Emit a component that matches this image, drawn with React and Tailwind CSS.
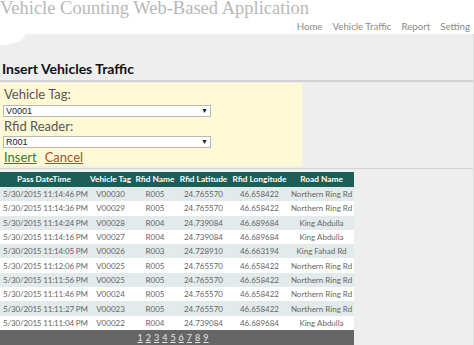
export default function App() {
  const rows = [
    ["5/30/2015 11:14:46 PM", "V00030", "R005", "24.765570", "46.658422", "Northern Ring Rd"],
    ["5/30/2015 11:14:36 PM", "V00029", "R005", "24.765570", "46.658422", "Northern Ring Rd"],
    ["5/30/2015 11:14:24 PM", "V00028", "R004", "24.739084", "46.689684", "King Abdulla"],
    ["5/30/2015 11:14:16 PM", "V00027", "R004", "24.739084", "46.689684", "King Abdulla"],
    ["5/30/2015 11:14:05 PM", "V00026", "R003", "24.728910", "46.663194", "King Fahad Rd"],
    ["5/30/2015 11:12:06 PM", "V00025", "R005", "24.765570", "46.658422", "Northern Ring Rd"],
    ["5/30/2015 11:11:56 PM", "V00025", "R005", "24.765570", "46.658422", "Northern Ring Rd"],
    ["5/30/2015 11:11:46 PM", "V00024", "R005", "24.765570", "46.658422", "Northern Ring Rd"],
    ["5/30/2015 11:11:27 PM", "V00023", "R005", "24.765570", "46.658422", "Northern Ring Rd"],
    ["5/30/2015 11:11:04 PM", "V00022", "R004", "24.739084", "46.689684", "King Abdulla"],
  ];
  const heads = ["Pass DateTime", "Vehicle Tag", "Rfid Name", "Rfid Latitude", "Rfid Longitude", "Road Name"];
  return (
    <div className="w-[474px] h-[345px] overflow-hidden bg-white font-['Lato',sans-serif]">
      <div className="h-[34px] flex flex-col">
        <div className="h-[17px] leading-[17px] text-[18.5px] text-[#b8b8b8] font-['Liberation_Serif',serif] whitespace-nowrap">
          Vehicle Counting Web-Based Application
        </div>
        <div className="flex justify-end gap-[10px] pr-[4px] mt-[3px] text-[9.7px] leading-[12px] text-[#8a8a8a]">
          <span>Home</span>
          <span>Vehicle Traffic</span>
          <span>Report</span>
          <span>Setting</span>
        </div>
      </div>
      <div className="relative h-[311px] bg-[#eeeeee] border-r border-[#dcdcdc]">
        <div className="absolute left-0 top-0 w-[25px] h-[11px] bg-white rounded-br-[100%]"></div>
        <div className="pt-[26px] pl-[2px] h-[46px] text-[14px] leading-[17px] font-bold text-[#111]">
          Insert Vehicles Traffic
        </div>
        <div className="border-t-2 border-b border-[#d2d2d2] pt-[1px] pb-[2px]">
          <div className="w-[302px] h-[83px] bg-[#fff9d5] pl-[3px] pt-[3px] text-[#555] text-[13px] leading-[16px]">
            <div className="pl-[1px]">Vehicle Tag:</div>
            <div className="mt-[3px] w-[208px] h-[12px] bg-white border border-[#b8b8b8] flex items-center justify-between px-[2px] text-[9px] text-[#222] font-['Liberation_Sans',sans-serif]">
              <span>V0001</span>
              <span className="text-[7px]">▼</span>
            </div>
            <div className="pl-[1px] mt-[1px]">Rfid Reader:</div>
            <div className="mt-[2px] w-[208px] h-[12px] bg-white border border-[#b8b8b8] flex items-center justify-between px-[2px] text-[9px] text-[#222] font-['Liberation_Sans',sans-serif]">
              <span>R001</span>
              <span className="text-[7px]">▼</span>
            </div>
            <div className="pl-[1px] mt-[1px] flex gap-[8px]">
              <span className="text-[#3d7a2c] underline">Insert</span>
              <span className="text-[#a4502f] underline">Cancel</span>
            </div>
          </div>
        </div>
        <table className="mt-[3px] w-[354px] table-fixed border-collapse text-[8px] text-[#666]">
          <colgroup>
            <col className="w-[88px]" />
            <col className="w-[45px]" />
            <col className="w-[44px]" />
            <col className="w-[53px]" />
            <col className="w-[59px]" />
            <col className="w-[65px]" />
          </colgroup>
          <thead>
            <tr className="h-[15px] bg-[#1c5e55] text-white font-bold text-[8.3px]">
              {heads.map((h) => (
                <th key={h} className="p-0 text-center whitespace-nowrap">{h}</th>
              ))}
            </tr>
          </thead>
          <tbody>
            {rows.map((r, i) => (
              <tr key={i} className={i % 2 === 0 ? "h-[14.3px] bg-[#e3eaeb]" : "h-[14.3px] bg-white"}>
                <td className="p-0 pl-[3px] whitespace-nowrap tracking-[-0.15px]">{r[0]}</td>
                <td className="p-0 text-center">{r[1]}</td>
                <td className="p-0 text-center">{r[2]}</td>
                <td className="p-0 text-center">{r[3]}</td>
                <td className="p-0 text-center">{r[4]}</td>
                <td className="p-0 text-center whitespace-nowrap">{r[5]}</td>
              </tr>
            ))}
            <tr className="h-[16px] bg-[#666666]">
              <td colSpan={6} className="p-0 text-center">
                <div className="flex justify-center gap-[3px] pr-[8px] text-[9px] text-[#e8e8e8]">
                  {[1, 2, 3, 4, 5, 6, 7, 8, 9].map((n) => (
                    <span key={n} className="underline">{n}</span>
                  ))}
                </div>
              </td>
            </tr>
          </tbody>
        </table>
      </div>
    </div>
  );
}
